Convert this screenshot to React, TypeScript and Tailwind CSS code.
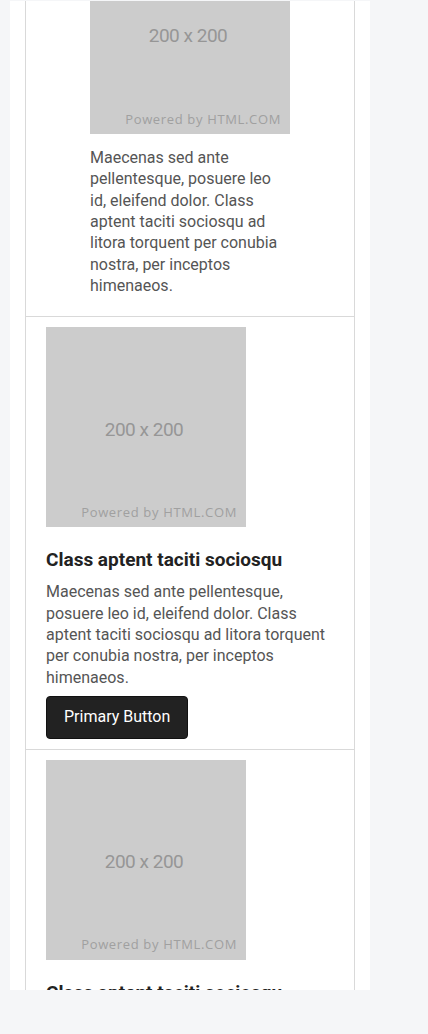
import React from "react";

const body =
  "Maecenas sed ante pellentesque, posuere leo id, eleifend dolor. Class aptent taciti sociosqu ad litora torquent per conubia nostra, per inceptos himenaeos.";

function Placeholder() {
  return (
    <div className="relative h-[200px] w-[200px] shrink-0 bg-[#cccccc]">
      <div className="flex h-full items-center justify-center pt-[5px] text-[19px] tracking-tight text-[#969696]">
        <span className="-ml-[4px]">200 x 200</span>
      </div>
      <span
        className="absolute bottom-[5px] right-[9px] text-[13px] tracking-[0.05em] text-[#a0a0a0]"
        style={{ fontFamily: '"Open Sans", "DejaVu Sans", sans-serif' }}
      >
        Powered by HTML.COM
      </span>
    </div>
  );
}

function CenteredItem() {
  return (
    <div className="flex flex-col items-center px-5 pb-5 pt-2.5">
      <div className="w-[200px]">
        <Placeholder />
        <p className="mt-[13px] text-[16px] leading-[21.33px] text-[#555555]">{body}</p>
      </div>
    </div>
  );
}

function CardItem() {
  return (
    <div className="border-t border-[#d9d9d9] px-5 pb-2.5 pt-2.5">
      <Placeholder />
      <h3 className="mt-5 text-[19px] font-bold leading-[26px] text-[#222222]">
        Class aptent taciti sociosqu
      </h3>
      <p className="mt-[8px] text-[16px] leading-[21.33px] text-[#555555]">{body}</p>
      <button className="mt-[8px] flex h-[43px] items-center rounded-[4px] border border-[#111111] bg-[#222222] px-[17px] text-[16px] text-white">
        Primary Button
      </button>
    </div>
  );
}

export default function App() {
  return (
    <div
      className="min-h-screen bg-[#f5f6f8] pt-px"
      style={{ fontFamily: 'Roboto, "Liberation Sans", sans-serif' }}
    >
      <div className="ml-[10px] h-[989px] w-[360px] overflow-hidden bg-white px-[15px]">
        <div className="-mt-[78px] border border-[#d9d9d9]">
          <CenteredItem />
          <CardItem />
          <CardItem />
        </div>
      </div>
    </div>
  );
}
